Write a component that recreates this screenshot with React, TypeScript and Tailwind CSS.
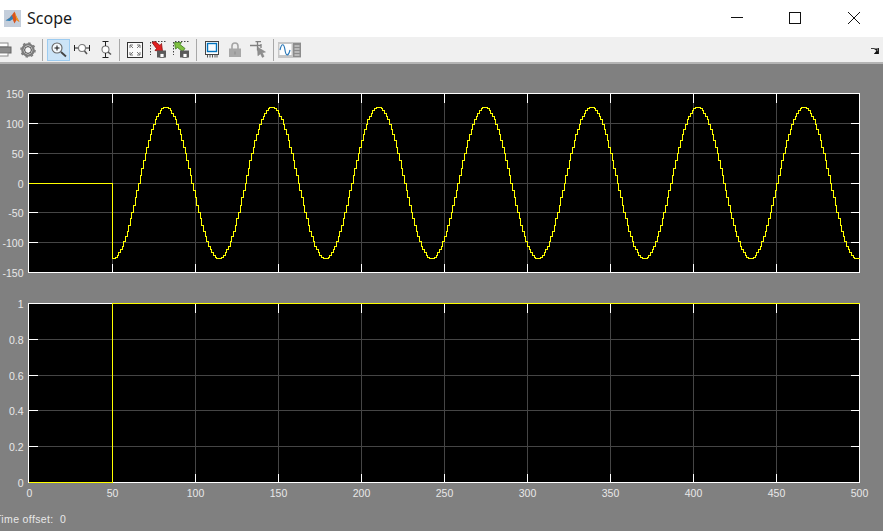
import React from "react";

// axis helpers: both plots share the same time scale
const tx = (t: number) => Math.floor(29 + t * 1.661) + 0.5;
const XTICKS = [0, 50, 100, 150, 200, 250, 300, 350, 400, 450, 500];
const PAD = 10; // room above the axes for the top tick label

interface PlotProps {
  height: number;
  yTicks: { v: number; label: string }[];
  yMin: number;
  yMax: number;
  path: string;
  showX?: boolean;
}

function Plot({ height, yTicks, yMin, yMax, path, showX }: PlotProps): JSX.Element {
  const x0 = 28.5;
  const x1 = 859.5;
  const y0 = PAD + 0.5;
  const y1 = PAD + 179.5;
  const ty = (v: number) => Math.round(PAD + ((yMax - v) / (yMax - yMin)) * 179) + 0.5;

  return (
    <svg width={883} height={height} className="block" fontFamily="'Liberation Sans', Arial, sans-serif">
      <rect x={x0} y={y0} width={x1 - x0} height={y1 - y0} fill="#000" />
      <g stroke="#454545" strokeWidth={1} shapeRendering="crispEdges">
        {XTICKS.slice(1, -1).map((t) => (
          <line key={t} x1={tx(t)} x2={tx(t)} y1={y0} y2={y1} />
        ))}
        {yTicks.slice(1, -1).map(({ v }) => (
          <line key={v} x1={x0} x2={x1} y1={ty(v)} y2={ty(v)} />
        ))}
      </g>
      <g stroke="#fff" strokeWidth={1} shapeRendering="crispEdges">
        {XTICKS.slice(1, -1).map((t) => (
          <React.Fragment key={t}>
            <line x1={tx(t)} x2={tx(t)} y1={y0} y2={y0 + 9} />
            <line x1={tx(t)} x2={tx(t)} y1={y1} y2={y1 - 9} />
          </React.Fragment>
        ))}
        {yTicks.slice(1, -1).map(({ v }) => (
          <React.Fragment key={v}>
            <line x1={x0} x2={x0 + 9} y1={ty(v)} y2={ty(v)} />
            <line x1={x1} x2={x1 - 9} y1={ty(v)} y2={ty(v)} />
          </React.Fragment>
        ))}
        <rect x={x0} y={y0} width={x1 - x0} height={y1 - y0} fill="none" />
      </g>
      <path d={path} fill="none" stroke="#ffff00" strokeWidth={1} shapeRendering="crispEdges" />
      <g fill="#e8e8e8" fontSize={10.5} textAnchor="end">
        {yTicks.map(({ v, label }) => (
          <text key={v} x={23.5} y={ty(v) + 4}>
            {label}
          </text>
        ))}
      </g>
      {showX && (
        <g fill="#e8e8e8" fontSize={10.5} textAnchor="middle">
          {XTICKS.map((t) => (
            <text key={t} x={tx(t)} y={y1 + 14}>
              {t}
            </text>
          ))}
        </g>
      )}
    </svg>
  );
}

// staircase: 64 samples per period, starts at the trough at t = 50
function sinePath(): string {
  const ty = (v: number) => Math.round(PAD + ((150 - v) / 300) * 179) + 0.5;
  let d = `M28.5 ${ty(0)} H${tx(50)}`;
  for (let t = 50; t <= 500; t++) {
    const v = Math.round(-127 * Math.cos(((t - 50) * 2 * Math.PI) / 64));
    d += ` V${ty(v)} H${Math.min(28.9 + (t + 1) * 1.662, 859.5).toFixed(1)}`;
  }
  return d;
}

const Sep = () => <div className="w-px h-[22px] bg-[#a8a8a8]" />;

function PrinterIcon() {
  return (
    <svg width={13} height={16} viewBox="0 0 13 16" className="block">
      <rect x={0} y={1} width={9} height={4} fill="#fff" stroke="#8a8a8a" />
      <rect x={-2} y={5} width={14} height={6} fill="#8c8c8c" stroke="#666" />
      <rect x={0} y={11} width={9} height={3} fill="#fff" stroke="#8a8a8a" />
    </svg>
  );
}

function GearIcon() {
  return (
    <svg width={16} height={16} viewBox="0 0 16 16" className="block">
      <circle cx={8} cy={8} r={5.6} fill="none" stroke="#7c7c7c" strokeWidth={2.4} />
      <circle cx={8} cy={8} r={7} fill="none" stroke="#7c7c7c" strokeWidth={1.6} strokeDasharray="2.4 3.1" />
      <circle cx={8} cy={8} r={3.4} fill="#f4f4f4" stroke="#444" strokeWidth={1} />
    </svg>
  );
}

function ZoomInIcon() {
  return (
    <svg width={16} height={16} viewBox="0 0 16 16" className="block">
      <circle cx={6} cy={6} r={5} fill="#f4f9fd" stroke="#666" strokeWidth={1.1} />
      <path d="M3.5 6h5M6 3.5v5" stroke="#111" strokeWidth={1} />
      <path d="M10 10l5 4.5" stroke="#444" strokeWidth={1.8} />
    </svg>
  );
}

function ZoomXIcon() {
  return (
    <svg width={16} height={14} viewBox="0 0 16 14" className="block">
      <circle cx={8} cy={5} r={3.5} fill="#fff" stroke="#777" strokeWidth={1.1} />
      <path d="M0.5 2v6M15.5 2v6M0.5 5h3.5M12 5h3.5" stroke="#222" strokeWidth={1} />
      <path d="M10.5 8l2.5 3" stroke="#555" strokeWidth={1.6} />
    </svg>
  );
}

function ZoomYIcon() {
  return (
    <svg width={12} height={17} viewBox="0 0 12 17" className="block">
      <circle cx={5.5} cy={8.5} r={3.5} fill="#fff" stroke="#777" strokeWidth={1.1} />
      <path d="M2.5 0.5h6M2.5 16.5h6M5.5 0.5v4.5M5.5 12v4.5" stroke="#222" strokeWidth={1} />
      <path d="M8 11l3 2.5" stroke="#555" strokeWidth={1.6} />
    </svg>
  );
}

function FitIcon() {
  return (
    <svg width={16} height={16} viewBox="0 0 16 16" className="block">
      <rect x={0.5} y={0.5} width={15} height={15} fill="#fafafa" stroke="#333" />
      <path d="M3 3h3M3 3v3M3 3l3 3M13 3h-3M13 3v3M13 3l-3 3M3 13h3M3 13v-3M3 13l3-3M13 13h-3M13 13v-3M13 13l-3-3" stroke="#777" strokeWidth={1} fill="none" />
    </svg>
  );
}

function ScaleIcon({ fill, edge, up }: { fill: string; edge: string; up?: boolean }) {
  return (
    <svg width={16} height={17} viewBox="0 0 16 17" className="block">
      <path d="M0.5 1v13M2 0.5h14" stroke="#444" strokeWidth={1} strokeDasharray="1.5 1.5" fill="none" />
      <path
        d={up ? "M1.5 1.5h7l-1.5 2 5 4-2.5 3-5-4-2 1.5z" : "M2 1.5l3-1 5 4 1.5-2 1 8-7.5-1 1.5-2z"}
        fill={fill}
        stroke={edge}
        strokeWidth={0.8}
      />
      <rect x={7} y={9.5} width={9} height={7} fill="#5a5a5a" />
      <rect x={10} y={12.5} width={4} height={4} fill="#fff" stroke="#5a5a5a" strokeWidth={0.8} />
    </svg>
  );
}

function MonitorIcon() {
  return (
    <svg width={14} height={17} viewBox="0 0 14 17" className="block">
      <rect x={0.5} y={0.5} width={13} height={13} fill="#fff" stroke="#444" />
      <rect x={2.5} y={2.5} width={9} height={8} fill="#f8fcff" stroke="#0072bd" strokeWidth={1.4} />
      <path d="M2.5 14v2.5M5 14v2.5M7.5 14v2.5M10 14v2.5M12 14v2.5" stroke="#444" strokeWidth={0.9} />
    </svg>
  );
}

function LockIcon() {
  return (
    <svg width={12} height={15} viewBox="0 0 12 15" className="block">
      <path d="M3 7V4a3 3 0 0 1 6 0v3" fill="none" stroke="#a5a5a5" strokeWidth={1.6} />
      <rect x={0} y={6.5} width={12} height={8.5} fill="#a8a8a8" />
      <path d="M6 9.5v3" stroke="#8a8a8a" strokeWidth={1} />
    </svg>
  );
}

function CursorIcon() {
  return (
    <svg width={16} height={17} viewBox="0 0 16 17" className="block">
      <path d="M0 4.5h11M5.5 0.5h5.5M7.5 0.5v9M11 3v4" stroke="#808080" strokeWidth={1.3} fill="none" />
      <path d="M7.5 6l8 5-3.2 0.8 1.8 3.6-1.8 1-1.8-3.6-2.6 2z" fill="#8e8e8e" stroke="#808080" strokeWidth={0.5} />
    </svg>
  );
}

function ScopeIcon() {
  return (
    <svg width={23} height={16} viewBox="0 0 23 16" className="block">
      <rect x={0} y={0} width={23} height={16} fill="#c6c6c6" />
      <rect x={1.5} y={2} width={12} height={11} fill="#fff" />
      <path d="M2 8c1.5-7 4-7 5 0s3.5 6 5 0" fill="none" stroke="#2a78b8" strokeWidth={1.2} />
      <rect x={15} y={1} width={8} height={14} fill="#8c8c8c" />
      <path d="M16.5 4h5M16.5 7h5M16.5 10h5M16.5 13h5" stroke="#e4e4e4" strokeWidth={1} />
    </svg>
  );
}

function MatlabLogo() {
  return (
    <svg width={17} height={17} viewBox="0 0 17 17" className="block">
      <rect x={0} y={0} width={17} height={17} fill="#c4cedb" />
      <path d="M1.5 10.5l4-2.5 2.5-3 2.5-3.5 2 5 3 5.5-3-2-2 3.5-2-4.5-1.5-1z" fill="#d9541e" />
      <path d="M1.5 10.5l4-2.5 2.5-3 1 4-3 2z" fill="#2c7fb8" />
      <path d="M10.5 1.5l2 5 3 5.5-3-2z" fill="#f0a01e" />
    </svg>
  );
}

const SINE_TICKS = [150, 100, 50, 0, -50, -100, -150].map((v) => ({ v, label: String(v) }));
const STEP_TICKS = [1, 0.8, 0.6, 0.4, 0.2, 0].map((v) => ({ v, label: String(v) }));
const STEP_PATH = `M28.5 ${PAD + 179.5} H${tx(50)} V${PAD + 0.5} H859.5`;

export default function App(): JSX.Element {
  return (
    <div className="w-[883px] h-[531px] flex flex-col overflow-hidden bg-[#808080]">
      {/* title bar */}
      <div className="h-[37px] bg-white flex items-center shrink-0">
        <div className="ml-[4px]">
          <MatlabLogo />
        </div>
        <span className="ml-[6px] mb-[2px] text-[16px] text-[#1a1a1a] font-['Noto_Sans','Liberation_Sans',sans-serif]">Scope</span>
        <div className="ml-auto flex items-center">
          <svg width={160} height={37} viewBox="0 0 160 37" className="block">
            <path d="M8 17.5h12" stroke="#111" strokeWidth={1} />
            <rect x={66.5} y={12.5} width={11} height={11} fill="none" stroke="#111" strokeWidth={1} />
            <path d="M125 12l12 12M137 12l-12 12" stroke="#111" strokeWidth={1} />
          </svg>
        </div>
      </div>

      {/* toolbar */}
      <div className="h-[25px] bg-[#f0f0f0] flex items-center shrink-0">
        <div className="ml-[-1px] w-[13px]">
          <PrinterIcon />
        </div>
        <div className="ml-[8px]">
          <GearIcon />
        </div>
        <div className="ml-[6px]">
          <Sep />
        </div>
        <div className="ml-[4px] w-[23px] h-[22px] bg-[#cce4f7] border border-[#9ccbf0] flex items-center justify-center">
          <ZoomInIcon />
        </div>
        <div className="ml-[4px]">
          <ZoomXIcon />
        </div>
        <div className="ml-[10px]">
          <ZoomYIcon />
        </div>
        <div className="ml-[7px]">
          <Sep />
        </div>
        <div className="ml-[7px]">
          <FitIcon />
        </div>
        <div className="ml-[7px]">
          <ScaleIcon fill="#e02020" edge="#8c1010" />
        </div>
        <div className="ml-[7px]">
          <ScaleIcon fill="#7fc040" edge="#3f7a20" up />
        </div>
        <div className="ml-[7px]">
          <Sep />
        </div>
        <div className="ml-[8px]">
          <MonitorIcon />
        </div>
        <div className="ml-[10px]">
          <LockIcon />
        </div>
        <div className="ml-[9px]">
          <CursorIcon />
        </div>
        <div className="ml-[7px]">
          <Sep />
        </div>
        <div className="ml-[4px]">
          <ScopeIcon />
        </div>
        <svg width={8} height={6} viewBox="0 0 8 6" className="block ml-auto mr-[4px] mt-[3px]">
          <path d="M0 0.5h3l4 3V0.5M7.5 0v6H3" fill="#111" stroke="#111" strokeWidth={0.8} />
        </svg>
      </div>
      <div className="h-[2px] bg-[#b4b4b4] shrink-0" />

      {/* plots */}
      <div className="flex-1 flex flex-col pt-[19px]">
        <Plot height={210} yTicks={SINE_TICKS} yMin={-150} yMax={150} path={sinePath()} />
        <Plot height={209} yTicks={STEP_TICKS} yMin={0} yMax={1} path={STEP_PATH} showX />
        <div className="flex-1 flex items-center pt-[6px] text-[10.5px] tracking-[0.35px] text-[#e8e8e8] font-['Liberation_Sans',Arial,sans-serif] overflow-hidden">
          <span className="ml-[-5px] w-[65px] shrink-0">Time offset:</span>
          <span>0</span>
        </div>
      </div>
    </div>
  );
}
